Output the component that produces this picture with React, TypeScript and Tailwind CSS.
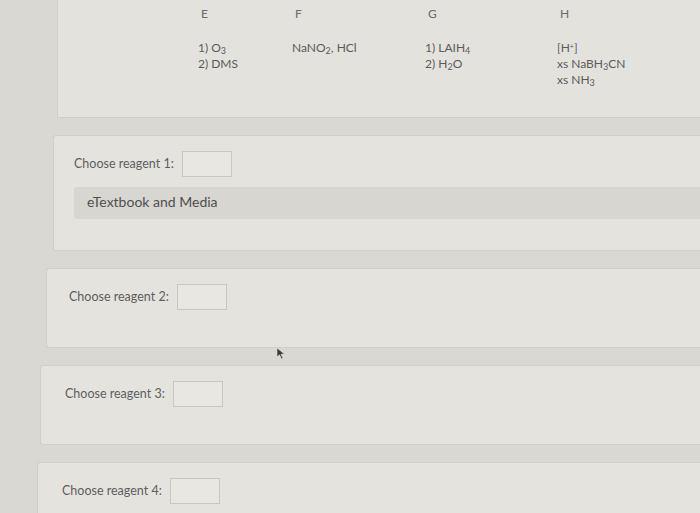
import type { ReactNode } from 'react'

const font = { fontFamily: 'Lato, "Open Sans", sans-serif' }

function Sub({ children }: { children: ReactNode }) {
  return <sub className="relative top-[2px] align-baseline text-[9px]">{children}</sub>
}

function ReagentBox() {
  return <span className="inline-block h-[26px] w-[50px] border border-[#c9c7c2] bg-[#e9e7e2]" />
}

function ReagentCard({
  n,
  left,
  padX,
  height,
  children,
}: {
  n: number
  left: string
  padX: string
  height: string
  children?: ReactNode
}) {
  return (
    <section className={`${left} ${height} rounded-l-[3px] border border-r-0 border-[#d1cfca] bg-[#e5e3de] pt-[15px]`}>
      <div className={`flex items-center gap-[8px] ${padX}`}>
        <span className="text-[12.5px] text-[#5e5e5e]">Choose reagent {n}:</span>
        <ReagentBox />
      </div>
      {children}
    </section>
  )
}

export default function App() {
  const columns = [
    { key: 'E', w: 'w-[94px]', lines: [<>1) O<Sub>3</Sub></>, <>2) DMS</>] },
    { key: 'F', w: 'w-[133px]', lines: [<>NaNO<Sub>2</Sub>, HCl</>] },
    { key: 'G', w: 'w-[132px]', lines: [<>1) LAIH<Sub>4</Sub></>, <>2) H<Sub>2</Sub>O</>] },
    { key: 'H', w: 'w-[130px]', lines: [<>[H<sup className="text-[7px]">+</sup>]</>, <>xs NaBH<Sub>3</Sub>CN</>, <>xs NH<Sub>3</Sub></>] },
  ]

  return (
    <div style={font} className="relative h-[513px] w-[700px] overflow-hidden bg-[#dad8d3]">
      <div className="ml-[57px] h-[118px] border-b border-l border-[#d1cfca] bg-[#e4e2dd] pl-[140px] pt-[5px]">
        <div className="flex">
          {columns.map((c) => (
            <div key={c.key} className={c.w}>
              <div className="pl-[3px] text-[12px] text-[#6a6a6a]">{c.key}</div>
              <div className="mt-[17px] text-[12px] leading-[16px] text-[#5b5b5b]">
                {c.lines.map((l, i) => (
                  <div key={i}>{l}</div>
                ))}
              </div>
            </div>
          ))}
        </div>
      </div>

      <div className="mt-[17px] flex flex-col gap-[17px]">
        <ReagentCard n={1} left="ml-[53px]" padX="pl-[20px]" height="h-[116px]">
          <div className="ml-[20px] mt-[10px] flex h-[32px] items-center rounded-l-[3px] bg-[#d7d6d1] pb-[4px] pl-[13px] text-[14px] text-[#4f4f4f]">
            eTextbook and Media
          </div>
        </ReagentCard>
        <ReagentCard n={2} left="ml-[46px]" padX="pl-[22px]" height="h-[80px]" />
        <ReagentCard n={3} left="ml-[40px]" padX="pl-[24px]" height="h-[80px]" />
        <ReagentCard n={4} left="ml-[37px]" padX="pl-[24px]" height="h-[80px]" />
      </div>

      <svg className="absolute left-[276px] top-[347px]" width="10" height="13" viewBox="0 0 10 13">
        <path d="M1 1 L1 10 L3.5 7.8 L5.5 12 L7 11.3 L5 7.2 L8.5 7 Z" fill="#3a3a3a" stroke="#e5e3de" strokeWidth="0.6" />
      </svg>
    </div>
  )
}
